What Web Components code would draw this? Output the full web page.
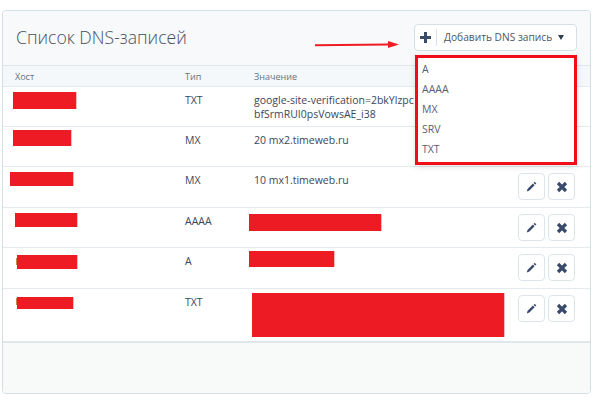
<!DOCTYPE html>
<html>
<head>
<meta charset="utf-8">
<title>DNS</title>
<style>
  html, body { margin: 0; background: #fff; }
  body { padding: 10px 0 0 2px; width: 589px; font-family: "Open Sans", sans-serif; color: #3a4660; }
</style>
</head>
<body>
<dns-panel>
  <dns-row type="TXT" h="40">
    <red-box slot="marks" style="left:10px;top:5px;width:63px;height:17px"></red-box>
    google-site-verification=2bkYlzpc<br>bfSrmRUI0psVowsAE_i38
  </dns-row>
  <dns-row type="MX" h="40">
    <red-box slot="marks" style="left:10px;top:3px;width:58px;height:16px"></red-box>
    20 mx2.timeweb.ru
  </dns-row>
  <dns-row type="MX" h="41" actions>
    <red-box slot="marks" style="left:7px;top:5px;width:63px;height:14px"></red-box>
    10 mx1.timeweb.ru
  </dns-row>
  <dns-row type="AAAA" h="40" actions>
    <red-box slot="marks" style="left:12px;top:5px;width:62px;height:14px"></red-box>
    <red-box slot="marks" style="left:246px;top:6px;width:132px;height:17px"></red-box>
  </dns-row>
  <dns-row type="A" h="41" actions>
    <red-box slot="marks" style="left:13px;top:10px;width:1px;height:7px;background:#c8873f"></red-box>
    <red-box slot="marks" style="left:14px;top:7px;width:60px;height:14px"></red-box>
    <red-box slot="marks" style="left:246px;top:3px;width:85px;height:16px"></red-box>
  </dns-row>
  <dns-row type="TXT" h="52" actions last>
    <red-box slot="marks" style="left:13px;top:9px;width:1px;height:7px;background:#c8873f"></red-box>
    <red-box slot="marks" style="left:14px;top:8px;width:56px;height:12px"></red-box>
    <red-box slot="marks" style="left:249px;top:4px;width:252px;height:44px"></red-box>
  </dns-row>
</dns-panel>

<script>
// иконки кнопок, общие для нескольких элементов
const PENCIL = `<svg width="11" height="11" viewBox="0 0 11 11"><path fill="currentColor" d="M6.9 2.6 8.6 4.3 3.4 9.6 0.8 10.4 1.5 7.9ZM7.6 1.9 8.7 0.8 10.4 2.5 9.3 3.6Z"/></svg>`;
const CROSS = `<svg width="12" height="12" viewBox="0 0 12 12"><path fill="none" stroke="currentColor" stroke-width="3.2" d="M2 2 10 10M10 2 2 10"/></svg>`;

class RedBox extends HTMLElement {
	constructor() {
		super();
		this.attachShadow({ mode: 'open' });
		this.shadowRoot.innerHTML = `<style>
			:host { display: block; position: absolute; background: #ed1c24; box-shadow: 1px 0 0 rgba(237,28,36,.3); }
		</style>`;
	}
}

class IconButton extends HTMLElement {
	constructor() {
		super();
		this.attachShadow({ mode: 'open' });
		this.shadowRoot.innerHTML = `<style>
			:host { display: flex; align-items: center; justify-content: center; box-sizing: border-box;
				width: 27px; height: 27px; border: 1px solid #dbe5ea; border-radius: 4px; background: #fff; color: #3a4a6b; }
			:host([ghost]) { border-color: transparent; opacity: .07; }
		</style><slot></slot>`;
	}
}

class DnsRow extends HTMLElement {
	constructor() {
		super();
		this.attachShadow({ mode: 'open' });
	}

	connectedCallback() {
		const ghost = this.hasAttribute('actions') ? '' : 'ghost';
		this.shadowRoot.innerHTML = `<style>
			:host { display: grid; grid-template-columns: 182px 69px 1fr auto; position: relative; box-sizing: border-box;
				height: ${this.getAttribute('h')}px; border-bottom: ${this.hasAttribute('last') ? 0 : 1}px solid #e4eaee;
				padding: 5px 15px 0 0; font-size: 10.5px; line-height: 14.3px; color: #3c4658; }
			.type { padding-top: 1px; }
			.value { padding-top: 1px; white-space: nowrap; }
			.actions { display: flex; gap: 3px; margin-top: 1px; align-self: start; }
		</style>
		<div></div>
		<div class="type">${this.getAttribute('type')}</div>
		<div class="value"><slot></slot></div>
		<div class="actions">
			<icon-button ${ghost}>${PENCIL}</icon-button>
			<icon-button ${ghost}>${CROSS}</icon-button>
		</div>
		<slot name="marks"></slot>`;
	}
}

class AddMenu extends HTMLElement {
	constructor() {
		super();
		this.attachShadow({ mode: 'open' });
		const items = ['A', 'AAAA', 'MX', 'SRV', 'TXT'].map(t => `<li>${t}</li>`).join('');
		this.shadowRoot.innerHTML = `<style>
			:host { display: block; position: relative; width: 163px; font-size: 10.5px; color: #4a5568; }
			.btn { display: flex; align-items: center; box-sizing: border-box; height: 27px; border: 1px solid #d5e0e6; border-radius: 4px; background: #fff; }
			.plus { display: flex; justify-content: center; align-items: center; width: 21px; height: 17px; border-right: 1px solid #dbe3e8; color: #3a4a6b; }
			.label { margin-left: 7px; font-size: 10.2px; color: #4d5664; }
			.caret { width: 0; height: 0; margin-left: 6px; border: 3.5px solid transparent; border-top: 5px solid #333d4d; border-bottom: 0; }
			ul { position: absolute; left: 1px; top: 31px; z-index: 2; width: 162px; height: 110px; margin: 0; padding: 1px 0 0 4px; box-sizing: border-box;
				list-style: none; background: #fff; border: 3px solid #f10d17; box-shadow: 0 2px 6px rgba(0,0,0,.12); color: #566076; }
			li { height: 20.2px; line-height: 20px; }
		</style>
		<div class="btn">
			<div class="plus"><svg width="13" height="13" viewBox="0 0 13 13"><path fill="none" stroke="currentColor" stroke-width="3" d="M6.5 1V12M1 6.5H12"/></svg></div>
			<span class="label">Добавить DNS запись</span>
			<span class="caret"></span>
		</div>
		<ul>${items}</ul>`;
	}
}

class DnsPanel extends HTMLElement {
	constructor() {
		super();
		this.attachShadow({ mode: 'open' });
		this.shadowRoot.innerHTML = `<style>
			:host { display: block; box-sizing: border-box; width: 589px; height: 384px; border: 1px solid #d3dfe6; border-radius: 4px; background: #fff; overflow: hidden; }
			header { display: flex; align-items: center; justify-content: space-between; position: relative; box-sizing: border-box; height: 55px;
				padding: 0 13px 2px 13px; background: #f8f9fa; border-bottom: 1px solid #dfe7ec; }
			h1 { margin: 0; font: 300 17.6px "Open Sans", sans-serif; color: #45505e; }
			.arrow { position: absolute; left: 312px; top: 30px; }
			.head { display: grid; grid-template-columns: 170px 69px 1fr; box-sizing: border-box; height: 21px; padding-left: 12px;
				align-items: center; background: #f4f8fb; border-bottom: 1px solid #e4eaee; font-size: 9px; color: #677383; }
			footer { height: 51px; background: #f8f9f9; border-top: 2px solid #dfe7ec; }
		</style>
		<header>
			<h1>Список DNS-записей</h1>
			<svg class="arrow" width="84" height="8" viewBox="0 0 84 8"><path fill="#ee1c24" d="M0 3.2 73 2.6V0L84 3.4 73 7V4.6L0 5.2Z"/></svg>
			<add-menu></add-menu>
		</header>
		<div class="head"><span>Хост</span><span>Тип</span><span>Значение</span></div>
		<slot></slot>
		<footer></footer>`;
	}
}

customElements.define('red-box', RedBox);
customElements.define('icon-button', IconButton);
customElements.define('dns-row', DnsRow);
customElements.define('add-menu', AddMenu);
customElements.define('dns-panel', DnsPanel);
</script>
</body>
</html>
